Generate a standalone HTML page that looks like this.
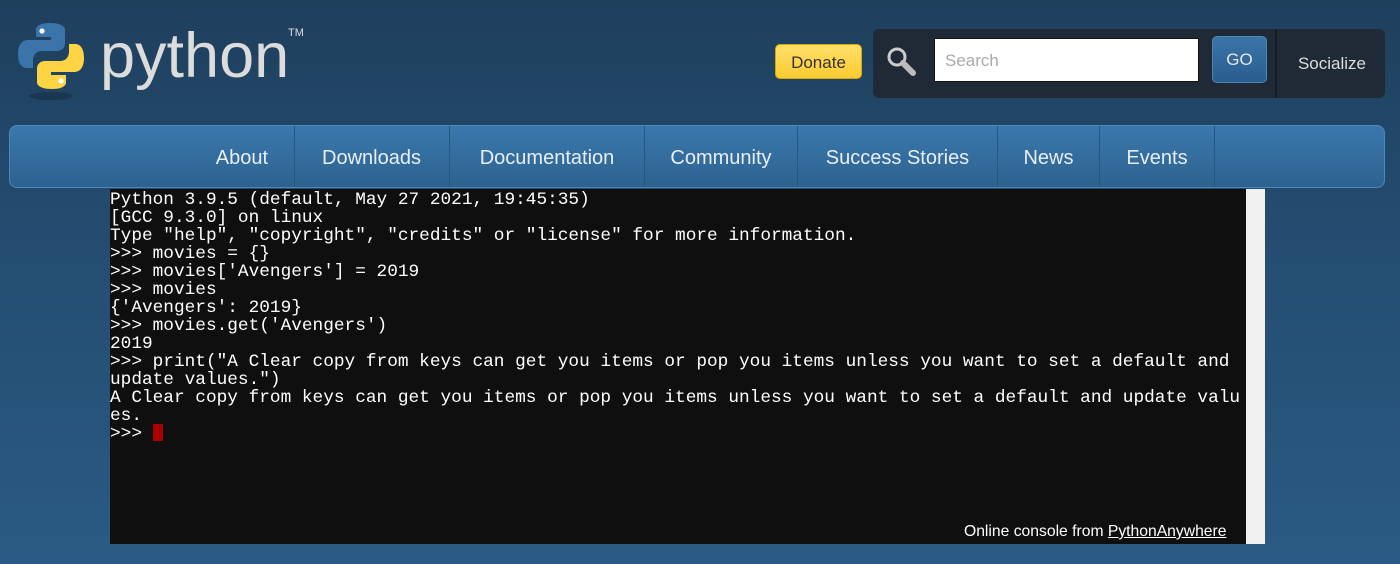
<!DOCTYPE html>
<html><head><style>
body{margin:0;width:1400px;height:564px;overflow:hidden;background:linear-gradient(#1f3f5d 0,#234b6e 200px,#2a5a83 564px);font-family:"Liberation Sans",sans-serif;position:relative}
.abs{position:absolute}
#logo{left:100px;top:16px;font-size:63px;color:#dcdcdc;font-family:"Liberation Sans",sans-serif;line-height:80px}
#tm{left:288px;top:27px;color:#ddd;font-size:11px}
#donate{left:775px;top:44px;width:87px;height:35px;background:linear-gradient(#ffdf6a,#fccb30);border:1px solid #d9a800;border-radius:5px;box-sizing:border-box;color:#333;font-size:17px;line-height:35px;text-align:center}
#bar{left:873px;top:29px;width:512px;height:69px;background:#1f2a36;border-radius:6px}
#search{left:934px;top:38px;width:265px;height:44px;background:#fff;box-sizing:border-box;border:1px solid #111;color:#aaa;font-size:17px;line-height:44px;padding-left:10px}
#go{left:1212px;top:36px;width:55px;height:47px;background:linear-gradient(#3a75a8,#2a5d8f);border:1px solid #4b87bd;border-radius:5px;box-sizing:border-box;color:#e8e8e8;font-size:17px;line-height:45px;text-align:center}
#soc{left:1275px;top:29px;width:110px;height:69px;border-left:2px solid #141c24;color:#ddd;font-size:17px;line-height:69px;text-align:center}
#nav{left:9px;top:125px;width:1376px;height:63px;background:linear-gradient(#3b78ad,#2d628f);border-radius:8px;border:1px solid #4a88bd;box-sizing:border-box}
.ni{position:absolute;top:0;height:61px;line-height:65px;color:#e8eef4;font-size:20px;border-right:1px solid #27567f;text-align:center}
#con{left:110px;top:189px;width:1136px;height:355px;background:#0f0f0f}
#scr{left:1246px;top:189px;width:19px;height:355px;background:#f0f0f0}
pre{margin:0;position:absolute;left:110px;top:191px;font-family:"Liberation Mono",monospace;font-size:17.78px;line-height:18px;color:#fff}
#cur{left:153px;top:424px;width:10px;height:17px;background:#a00}
#foot{left:964px;top:523px;color:#fff;font-size:15.7px}
</style></head><body>
<svg class="abs" style="left:16px;top:20px" width="70" height="82" viewBox="0 0 70 82">
<ellipse cx="35" cy="76" rx="22" ry="4" fill="#1a3048" opacity=".7"/>
<path d="M34 3c-14 0-14 6-14 6v8h15v3H12S2 19 2 34s9 14 9 14h6v-8s0-9 9-9h15s8 0 8-8V10S50 3 34 3z" fill="#3a74a8"/>
<circle cx="26" cy="11" r="2.6" fill="#fff"/>
<path d="M36 69c14 0 14-6 14-6v-8H35v-3h23s10 1 10-14-9-14-9-14h-6v8s0 9-9 9H29s-8 0-8 8v13S20 69 36 69z" fill="#fdd443"/>
<circle cx="45" cy="61" r="2.6" fill="#fff"/>
</svg>
<div class="abs" id="logo">python</div>
<div class="abs" id="tm">TM</div>
<div class="abs" id="donate">Donate</div>
<div class="abs" id="bar"></div>
<svg class="abs" style="left:886px;top:46px" width="32" height="32" viewBox="0 0 32 32"><circle cx="11" cy="11" r="8" fill="none" stroke="#ccc" stroke-width="3"/><path d="M17 17l10 10" stroke="#bbb" stroke-width="6" stroke-linecap="round"/></svg>
<div class="abs" id="search">Search</div>
<div class="abs" id="go">GO</div>
<div class="abs" id="soc">Socialize</div>
<div class="abs" id="nav">
<div class="ni" style="left:0;width:284px"><span style="position:absolute;right:26px">About</span></div>
<div class="ni" style="left:284px;width:155px">Downloads</div>
<div class="ni" style="left:440px;width:194px">Documentation</div>
<div class="ni" style="left:635px;width:152px">Community</div>
<div class="ni" style="left:788px;width:199px">Success Stories</div>
<div class="ni" style="left:988px;width:101px">News</div>
<div class="ni" style="left:1090px;width:114px">Events</div>
</div>
<div class="abs" id="con"></div>
<div class="abs" id="scr"></div>
<pre>Python 3.9.5 (default, May 27 2021, 19:45:35)
[GCC 9.3.0] on linux
Type "help", "copyright", "credits" or "license" for more information.
&gt;&gt;&gt; movies = {}
&gt;&gt;&gt; movies['Avengers'] = 2019
&gt;&gt;&gt; movies
{'Avengers': 2019}
&gt;&gt;&gt; movies.get('Avengers')
2019
&gt;&gt;&gt; print("A Clear copy from keys can get you items or pop you items unless you want to set a default and
update values.")
A Clear copy from keys can get you items or pop you items unless you want to set a default and update valu
es.
&gt;&gt;&gt;</pre>
<div class="abs" id="cur"></div>
<div class="abs" id="foot">Online console from <u>PythonAnywhere</u></div>
</body></html>
